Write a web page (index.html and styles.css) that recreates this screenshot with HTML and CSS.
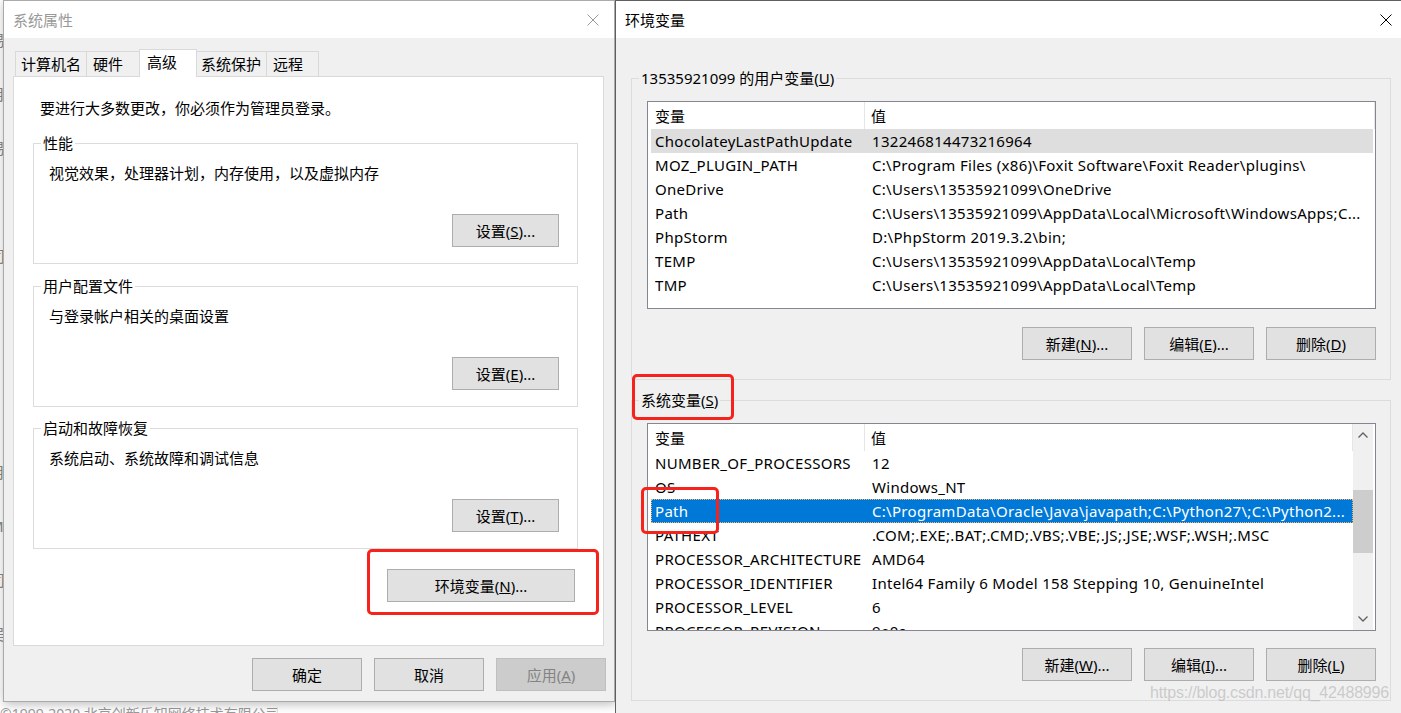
FILE: index.html
```html
<!DOCTYPE html>
<html lang="zh-CN">
<head>
<meta charset="UTF-8" />
<title>系统属性 - 环境变量</title>
<link rel="stylesheet" href="styles.css">
</head>
<body>
  <div class="page">
    <div class="page-side">
      <span>易</span><span>月</span><span>易</span><span>0</span><span>司</span><span>0</span><span>C</span><span>S</span><span>月</span><span>M</span><span>司</span><span>吴</span>
    </div>
    <div class="page-footer">©1999-2020 北京创新乐知网络技术有限公司</div>
  </div>

  <!-- 系统属性 -->
  <div class="window sysprops">
    <div class="titlebar">
      <span class="title">系统属性</span>
      <svg class="close" width="12" height="12" viewBox="0 0 12 12"><path d="M0.5 0.5L11.5 11.5M11.5 0.5L0.5 11.5" /></svg>
    </div>
    <div class="win-body">
      <div class="tabs">
        <div class="tab">计算机名</div>
        <div class="tab">硬件</div>
        <div class="tab active">高级</div>
        <div class="tab">系统保护</div>
        <div class="tab">远程</div>
      </div>
      <div class="tab-panel">
        <p class="intro">要进行大多数更改，你必须作为管理员登录。</p>

        <fieldset class="group">
          <legend>性能</legend>
          <div class="group-body">
            <p>视觉效果，处理器计划，内存使用，以及虚拟内存</p>
            <div class="group-actions"><button class="btn small">设置(<u>S</u>)...</button></div>
          </div>
        </fieldset>

        <fieldset class="group">
          <legend>用户配置文件</legend>
          <div class="group-body">
            <p>与登录帐户相关的桌面设置</p>
            <div class="group-actions"><button class="btn small">设置(<u>E</u>)...</button></div>
          </div>
        </fieldset>

        <fieldset class="group last">
          <legend>启动和故障恢复</legend>
          <div class="group-body">
            <p>系统启动、系统故障和调试信息</p>
            <div class="group-actions"><button class="btn small">设置(<u>T</u>)...</button></div>
          </div>
        </fieldset>

        <div class="env-row"><button class="btn wide">环境变量(<u>N</u>)...</button></div>
      </div>
      <div class="dialog-actions">
        <button class="btn">确定</button>
        <button class="btn">取消</button>
        <button class="btn" disabled>应用(<u>A</u>)</button>
      </div>
    </div>
  </div>

  <!-- 环境变量 -->
  <div class="window envvars">
    <div class="titlebar">
      <span class="title">环境变量</span>
      <svg class="close" width="12" height="12" viewBox="0 0 12 12"><path d="M0.5 0.5L11.5 11.5M11.5 0.5L0.5 11.5" /></svg>
    </div>
    <div class="win-body env-body">
      <fieldset class="group env-group">
        <legend>13535921099 的用户变量(<u>U</u>)</legend>
        <div class="group-body">
          <div class="list">
            <div class="list-main">
              <div class="list-head"><div class="hcol">变量</div><div class="hcol val">值</div></div>
              <div class="row hot"><div class="c1">ChocolateyLastPathUpdate</div><div class="c2">132246814473216964</div></div>
              <div class="row"><div class="c1">MOZ_PLUGIN_PATH</div><div class="c2">C:\Program Files (x86)\Foxit Software\Foxit Reader\plugins\</div></div>
              <div class="row"><div class="c1">OneDrive</div><div class="c2">C:\Users\13535921099\OneDrive</div></div>
              <div class="row"><div class="c1">Path</div><div class="c2">C:\Users\13535921099\AppData\Local\Microsoft\WindowsApps;C...</div></div>
              <div class="row"><div class="c1">PhpStorm</div><div class="c2">D:\PhpStorm 2019.3.2\bin;</div></div>
              <div class="row"><div class="c1">TEMP</div><div class="c2">C:\Users\13535921099\AppData\Local\Temp</div></div>
              <div class="row"><div class="c1">TMP</div><div class="c2">C:\Users\13535921099\AppData\Local\Temp</div></div>
            </div>
          </div>
          <div class="list-actions">
            <button class="btn">新建(<u>N</u>)...</button>
            <button class="btn">编辑(<u>E</u>)...</button>
            <button class="btn">删除(<u>D</u>)</button>
          </div>
        </div>
      </fieldset>

      <fieldset class="group env-group second">
        <legend>系统变量(<u>S</u>)</legend>
        <div class="group-body">
          <div class="list">
            <div class="list-main">
              <div class="list-head"><div class="hcol">变量</div><div class="hcol val">值</div></div>
              <div class="row"><div class="c1">NUMBER_OF_PROCESSORS</div><div class="c2">12</div></div>
              <div class="row"><div class="c1">OS</div><div class="c2">Windows_NT</div></div>
              <div class="row selected"><div class="c1">Path</div><div class="c2">C:\ProgramData\Oracle\Java\javapath;C:\Python27\;C:\Python2...</div></div>
              <div class="row"><div class="c1">PATHEXT</div><div class="c2">.COM;.EXE;.BAT;.CMD;.VBS;.VBE;.JS;.JSE;.WSF;.WSH;.MSC</div></div>
              <div class="row"><div class="c1">PROCESSOR_ARCHITECTURE</div><div class="c2">AMD64</div></div>
              <div class="row"><div class="c1">PROCESSOR_IDENTIFIER</div><div class="c2">Intel64 Family 6 Model 158 Stepping 10, GenuineIntel</div></div>
              <div class="row"><div class="c1">PROCESSOR_LEVEL</div><div class="c2">6</div></div>
              <div class="row"><div class="c1">PROCESSOR_REVISION</div><div class="c2">9e0a</div></div>
            </div>
            <div class="scrollbar">
              <div class="sb-btn"><svg width="10" height="6" viewBox="0 0 10 6"><path d="M0.5 5.5L5 1L9.5 5.5" /></svg></div>
              <div class="sb-track"><div class="sb-thumb"></div></div>
              <div class="sb-btn"><svg width="10" height="6" viewBox="0 0 10 6"><path d="M0.5 0.5L5 5L9.5 0.5" /></svg></div>
            </div>
          </div>
          <div class="list-actions">
            <button class="btn">新建(<u>W</u>)...</button>
            <button class="btn">编辑(<u>I</u>)...</button>
            <button class="btn">删除(<u>L</u>)</button>
          </div>
        </div>
      </fieldset>
    </div>
  </div>

  <!-- 红框标注 -->
  <div class="mark mark-env"></div>
  <div class="mark mark-sys"></div>
  <div class="mark mark-path"></div>

  <div class="watermark">https://blog.csdn.net/qq_42488996</div>
</body>
</html>
```

FILE: styles.css
```css
* {
  box-sizing: border-box;
}
html, body {
  margin: 0;
}
body {
  width: 1401px;
  height: 713px;
  overflow: hidden;
  position: relative;
  font-family: "Noto Sans", "Noto Sans CJK SC", sans-serif;
  font-size: 15px;
  color: #000;
  background: #fff;
}
p {
  margin: 0;
}

/* background web page */
.page {
  height: 713px;
  display: flex;
  flex-direction: column;
  justify-content: space-between;
}
.page-side {
  display: flex;
  flex-direction: column;
  gap: 34px;
  margin-left: -10px;
  padding-top: 30px;
  color: #8a8a8a;
  font-size: 15px;
  line-height: 20px;
}
.page-footer {
  width: 278px;
  border-right: 1px solid #e6e6e6;
  color: #9a9a9a;
  font-size: 14px;
  line-height: 14px;
  margin-bottom: -8px;
  white-space: nowrap;
  overflow: hidden;
}

/* windows */
.window {
  position: absolute;
  top: 0;
  display: flex;
  flex-direction: column;
  background: #f0f0f0;
}
.sysprops {
  left: 3px;
  width: 612px;
  height: 702px;
  border: 1px solid #aaaaaa;
  box-shadow: 1px 2px 10px rgba(0,0,0,0.28);
}
.envvars {
  left: 615px;
  width: 788px;
  height: 720px;
  border: 1px solid #5f5f5f;
}
.titlebar {
  height: 37px;
  flex: none;
  background: #fff;
  display: flex;
  align-items: center;
  justify-content: space-between;
  padding: 0 15px 0 9px;
}
.envvars .titlebar {
  padding-right: 10px;
}
.title {
  line-height: 20px;
}
.sysprops .title {
  color: #999;
}
.close path {
  stroke: #000;
  stroke-width: 1;
  fill: none;
}
.sysprops .close path {
  stroke: #999;
}
.win-body {
  flex: 1;
  padding: 11px 0 0 9px;
}

/* tabs */
.tabs {
  display: flex;
  align-items: flex-end;
  height: 27px;
  margin-left: 2px;
}
.tab {
  height: 25px;
  padding-left: 5px;
  margin-left: -1px;
  line-height: 24px;
  border: 1px solid #d9d9d9;
  border-bottom: none;
  background: #f0f0f0;
  white-space: nowrap;
}
.tab:nth-child(1) {
  width: 72px;
  margin-left: 0;
}
.tab:nth-child(2) {
  width: 54px;
  padding-left: 6px;
}
.tab:nth-child(4) {
  width: 71px;
  padding-left: 4px;
}
.tab:nth-child(5) {
  width: 53px;
  padding-left: 6px;
}
.tab.active {
  position: relative;
  z-index: 1;
  width: 58px;
  height: 28px;
  margin-bottom: -1px;
  padding-left: 7px;
  line-height: 24px;
  background: #fff;
}
.tab-panel {
  width: 591px;
  height: 570px;
  background: #fff;
  border: 1px solid #d9d9d9;
}
.intro {
  padding: 21px 0 0 26px;
  line-height: 20px;
}

/* group boxes */
.group {
  margin: 15px 0 0 19px;
  width: 545px;
  padding: 0;
  border: 1px solid #dcdcdc;
  min-inline-size: auto;
}
.group + .group {
  margin-top: 12px;
}
.group.last {
  margin-top: 11px;
}
.group legend {
  margin-left: 7px;
  padding: 0 2px;
  line-height: 20px;
}
.group-body {
  padding: 10px 18px 16px 15px;
}
.group-body p {
  line-height: 20px;
}
.group-actions {
  display: flex;
  justify-content: flex-end;
  margin-top: 31px;
}
.env-row {
  display: flex;
  justify-content: flex-end;
  padding-right: 28px;
  margin-top: 20px;
}
.dialog-actions {
  display: flex;
  justify-content: flex-end;
  gap: 12px;
  padding-right: 8px;
  margin-top: 12px;
}

/* buttons */
.btn {
  width: 110px;
  height: 33px;
  padding: 0;
  font: inherit;
  color: #000;
  background: #e1e1e1;
  border: 1px solid #adadad;
  border-radius: 0;
}
.btn.small {
  width: 107px;
}
.btn.wide {
  width: 188px;
}
.btn:disabled {
  background: #cccccc;
  border-color: #bfbfbf;
  color: #838383;
}

/* environment dialog */
.env-body {
  padding: 30px 0 0 15px;
}
.env-group {
  margin: 0;
  width: 760px;
}
.env-group.second {
  margin-top: 10px;
}
.env-group .group-body {
  padding: 13px 14px 19px 15px;
}
.list {
  display: flex;
  height: 208px;
  background: #fff;
  border: 1px solid #828790;
  overflow: hidden;
}
.list-main {
  flex: 1;
  min-width: 0;
}
.list-head {
  display: flex;
  height: 27px;
  padding-top: 2px;
  line-height: 25px;
}
.hcol {
  width: 217px;
  padding-left: 7px;
  border-right: 1px solid #e5e5e5;
  margin-top: -2px;
  padding-top: 2px;
}
.hcol.val {
  flex: 1;
  width: auto;
  padding-left: 6px;
}
.row {
  display: flex;
  height: 24px;
  line-height: 24px;
  margin: 0 2px 0 3px;
  white-space: nowrap;
  letter-spacing: 0.3px;
}
.row .c1 {
  width: 214px;
  padding-left: 4px;
  flex: none;
}
.row .c2 {
  flex: 1;
  padding-left: 7px;
  overflow: hidden;
}
.row.hot {
  background: #dedede;
}
.row.selected {
  background: #0078d7;
  color: #fff;
  outline: 1px dotted #f4b860;
  outline-offset: -1px;
  margin-right: 0;
}
.scrollbar {
  width: 20px;
  margin-right: 2px;
  display: flex;
  flex-direction: column;
  background: #f0f0f0;
}
.sb-btn {
  height: 22px;
  display: flex;
  align-items: center;
  justify-content: center;
}
.sb-btn path {
  stroke: #606060;
  stroke-width: 1.3;
  fill: none;
}
.sb-track {
  flex: 1;
  padding-top: 44px;
}
.sb-thumb {
  height: 63px;
  background: #cdcdcd;
}
.list-actions {
  display: flex;
  justify-content: flex-end;
  gap: 12px;
  margin-top: 18px;
}
.second .list-actions {
  margin-top: 17px;
}

/* annotations */
.mark {
  position: absolute;
  border: 3px solid #f5231b;
  border-radius: 5px;
}
.mark-env {
  left: 367px;
  top: 549px;
  width: 232px;
  height: 66px;
}
.mark-sys {
  left: 632px;
  top: 374px;
  width: 102px;
  height: 46px;
}
.mark-path {
  left: 641px;
  top: 487px;
  width: 78px;
  height: 47px;
}
.watermark {
  position: absolute;
  left: 1150px;
  top: 682px;
  font-family: "Liberation Sans", sans-serif;
  font-size: 16px;
  line-height: 22px;
  color: rgba(170,170,170,0.55);
  letter-spacing: -0.2px;
  white-space: nowrap;
}
```
